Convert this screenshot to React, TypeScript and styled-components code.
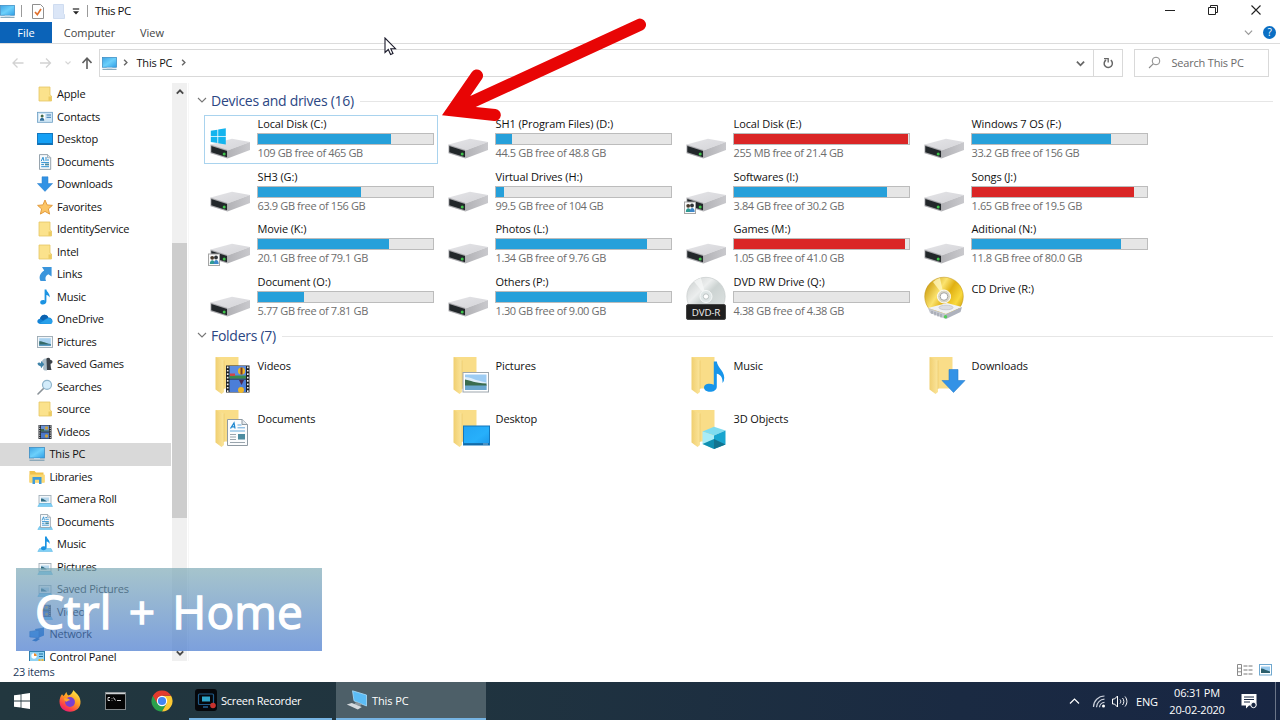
import React from "react";
import styled, { createGlobalStyle } from "styled-components";

const GlobalStyle = createGlobalStyle`
  * { box-sizing: border-box; }
  body {
    margin: 0;
    background: #fff;
    font-family: "Open Sans", "Noto Sans", sans-serif;
    font-size: 11px;
    letter-spacing: -0.1px;
    color: #111;
    overflow: hidden;
  }
  svg { display: block; flex: none; }
`;

/* ---------- icons ---------- */

const Monitor = ({ size = 16 }: { size?: number }) => (
  <svg width={size} height={size} viewBox="0 0 16 16">
    <defs>
      <linearGradient id="screen" x1="0" y1="0" x2="1" y2="1">
        <stop offset="0" stopColor="#3fa4e4" />
        <stop offset="0.5" stopColor="#6cd0fb" />
        <stop offset="1" stopColor="#2f9ee6" />
      </linearGradient>
    </defs>
    <rect x="0.5" y="1.5" width="15" height="10.5" fill="url(#screen)" stroke="#3c8dc4" strokeWidth="0.8" />
    <path d="M5 12.3h6v1.2H5z" fill="#cfe3ef" />
    <path d="M0.5 14.2h15" stroke="#6a93ab" strokeWidth="1" />
  </svg>
);

const FolderSmall = () => (
  <svg width="16" height="16" viewBox="0 0 16 16">
    <path d="M2 1h11v8l1.5 1v5H2z" fill="#fbe28c" stroke="#e6c765" strokeWidth="0.8" />
    <path d="M11.5 10.5h2.8v4.3h-2.8z" fill="#eccb62" />
  </svg>
);

const ContactsIcon = () => (
  <svg width="16" height="16" viewBox="0 0 16 16">
    <rect x="0.5" y="3.3" width="15" height="10" fill="#cfe6f6" stroke="#6d9fc4" strokeWidth="0.8" />
    <rect x="2.3" y="5" width="5.6" height="6.8" fill="#fff" />
    <circle cx="5.1" cy="7" r="1.5" fill="#456b4c" />
    <path d="M2.8 11.8c0-4 4.6-4 4.6 0z" fill="#2d6e9c" />
    <path d="M9.5 6h4.5M9.5 8.3h4.5" stroke="#3f7db3" />
  </svg>
);

const DesktopSmall = () => (
  <svg width="16" height="16" viewBox="0 0 16 16">
    <rect x="0.5" y="2.5" width="15" height="11" fill="#15a0f5" stroke="#1477bd" />
    <path d="M1 12.8h14" stroke="#0e5f9c" />
  </svg>
);

const PageShape = () => (
  <>
    <path d="M2.5.6h8.2l3 3v11.8H2.5z" fill="#f7fafc" stroke="#8b9aa5" strokeWidth="0.9" />
    <path d="M10.5.8v3h3" fill="#dce5eb" stroke="#8b9aa5" strokeWidth="0.7" />
    <path d="M4.2 7.2 6 3.2l1 4M8 4h2M8 6h4M4.2 8.6h7.8M4.2 10.6H7M4.2 12.7H12" stroke="#2d8fd0" fill="none" strokeWidth="1" />
    <path d="M8 9.6h4v1.8H8z" fill="#4b8a9c" />
  </>
);

const DocumentSmall = () => (
  <svg width="16" height="16" viewBox="0 0 16 16"><PageShape /></svg>
);

const DownloadIcon = () => (
  <svg width="16" height="16" viewBox="0 0 16 16">
    <path d="M5 .8h6v6.7h4.6L8 15.4.4 7.5H5z" fill="#3292e4" stroke="#2b7fca" strokeWidth="0.5" />
  </svg>
);

const StarIcon = () => (
  <svg width="16" height="16" viewBox="0 0 16 16">
    <path d="M8 1l2.1 4.9 5.3.5-4 3.5 1.2 5.2L8 12.4l-4.6 2.7 1.2-5.2-4-3.5 5.3-.5z" fill="#fcc566" stroke="#df9433" strokeWidth="0.9" />
  </svg>
);

const LinkIcon = () => (
  <svg width="16" height="16" viewBox="0 0 16 16">
    <path d="M5 1h9.600v9.400L11.300 8.300C8.500 10 7.800 12 9 15H3.500C1.500 11 3 7 7.200 4.400z" fill="#3a95dc" />
  </svg>
);

const NoteShape = () => (
  <path d="M7.600.6h1.800c.3 2.700 4 3.900 3.100 8-.6-1.800-1.700-2.500-3.100-2.700v6.600c0 3.600-6.200 3.900-6.200.9 0-2 2.500-2.900 4.400-2z" fill="#1b93e2" />
);

const MusicSmall = () => (
  <svg width="16" height="16" viewBox="0 0 16 16"><NoteShape /></svg>
);

const CloudIcon = () => (
  <svg width="16" height="16" viewBox="0 0 16 16">
    <path d="M3.200 13C-.8 12.600-.4 8 3 7.700 4 3 10 2.500 11.300 6.500c4.700-.2 5.700 5.800 1.700 6.500z" fill="#1483d6" />
    <path d="M3 7.700C4 3 10 2.500 11.300 6.500L6 9.500z" fill="#0c62b0" />
    <path d="M2 12.500l9-5.200c4-.5 6 4.700 2.200 5.700z" fill="#28a0ea" />
  </svg>
);

const PictureShape = () => (
  <>
    <rect x="0.5" y="2.500" width="15" height="11" fill="#f2f6f9" stroke="#9aa8b2" strokeWidth="0.9" />
    <rect x="2.200" y="4.200" width="11.600" height="7.600" fill="#a9d2f0" />
    <path d="M2.200 7.200c4 0 6 2 11.600 2.800v1.800H2.200z" fill="#356a68" />
    <path d="M2.200 10.500h11.600v1.300H2.200z" fill="#5b9fd0" />
  </>
);

const PictureSmall = () => (
  <svg width="16" height="16" viewBox="0 0 16 16"><PictureShape /></svg>
);

const GamesIcon = () => (
  <svg width="16" height="16" viewBox="0 0 16 16">
    <path d="M9 3c1.500-2 4.500-1.500 4.300 1 2.700-.5 3 3.500.4 3.700-.4 2 .3 4 .8 6.300H8.500z" fill="#3c4248" />
    <path d="M4.500 6.500C5 3 9 1 9.500 3.500L10 14.500c-4 .5-4.500-2-3.500-4z" fill="#a9bcc7" />
    <path d="M.5 7.200c1-1 2.500-1 3.300.300L4.200 5l3 3.300-3 4-.8-2.300C2 10.200.8 9 .5 7.200z" fill="#3f83a8" />
  </svg>
);

const SearchColor = () => (
  <svg width="16" height="16" viewBox="0 0 16 16">
    <path d="M1 15l5.500-5.500" stroke="#8a9298" strokeWidth="1.600" strokeLinecap="round" />
    <circle cx="10" cy="5.800" r="4.500" fill="#d3ecfb" stroke="#8fb4cb" strokeWidth="1.200" />
  </svg>
);

const FilmShape = () => (
  <>
    <rect x="1.500" y="1" width="13" height="14" fill="#262a30" />
    <rect x="4" y="1.500" width="8" height="6" fill="#6b92d8" />
    <rect x="4" y="8.500" width="8" height="6" fill="#4c79c9" />
    <circle cx="9.500" cy="4" r="1.700" fill="#c9a23f" />
    <circle cx="9.500" cy="12" r="1.700" fill="#c9a23f" />
    <path d="M4 6.500h8v1H4zM4 5h3v1.500H4z" fill="#3d6a52" />
    <path d="M2.700 1.500v13M13.300 1.500v13" stroke="#d5d5d5" strokeDasharray="1.200 1.100" strokeWidth="1" />
  </>
);

const FilmSmall = () => (
  <svg width="16" height="16" viewBox="0 0 16 16"><FilmShape /></svg>
);

const LibrariesIcon = () => (
  <svg width="16" height="16" viewBox="0 0 16 16">
    <path d="M.5 2h5l1.500 1.500h7.500V6h1v7.500H.5z" fill="#f0c24c" />
    <path d="M.5 5.500h15v8H.5z" fill="#fbd973" />
    <path d="M3.500 8h9v7H10v-4.200H6V15H3.500z" fill="#3f9bd9" />
  </svg>
);

const TrayShape = () => (
  <path d="M2.500 12.500h11.500l1.500 3H.8z" fill="#7fd0f6" stroke="#55b3e2" strokeWidth="0.5" />
);

const LibPicture = () => (
  <svg width="16" height="16" viewBox="0 0 16 16">
    <rect x="2" y="4.500" width="12" height="8" fill="#f2f6f9" stroke="#9aa8b2" strokeWidth="0.8" />
    <path d="M4 6.500h8v4H4z" fill="#b5d6ec" />
    <path d="M4 7.500c3 0 4 2 6 3H4z" fill="#2f6a80" />
    <TrayShape />
  </svg>
);

const LibDocument = () => (
  <svg width="16" height="16" viewBox="0 0 16 16">
    <TrayShape />
    <g transform="translate(1.300 0) scale(0.880)"><PageShape /></g>
  </svg>
);

const LibMusic = () => (
  <svg width="16" height="16" viewBox="0 0 16 16">
    <TrayShape />
    <g transform="translate(1 0) scale(0.920)"><NoteShape /></g>
  </svg>
);

const LibVideo = () => (
  <svg width="16" height="16" viewBox="0 0 16 16">
    <TrayShape />
    <g transform="translate(1.500 0) scale(0.850)"><FilmShape /></g>
  </svg>
);

const NetworkIcon = () => (
  <svg width="16" height="16" viewBox="0 0 16 16">
    <path d="M6 3l9-1.500v8L9 12z" fill="#2c86d6" />
    <path d="M.8 5.500l9.200-1.300v7.600L.8 11z" fill="#3da0ee" stroke="#1f6fb8" strokeWidth="0.6" />
    <path d="M3 14.500l5-3 3 1.500-4 2.500z" fill="#2478bf" />
  </svg>
);

const ControlPanelIcon = () => (
  <svg width="16" height="16" viewBox="0 0 16 16">
    <rect x="0.500" y="2.500" width="15" height="11.500" fill="#8fd2f3" stroke="#2f7fae" />
    <circle cx="5" cy="7" r="2.700" fill="#fff" />
    <path d="M5 7V4.300A2.700 2.700 0 0 1 7.700 7z" fill="#f08b2c" />
    <path d="M10 5h4M10 7.500h4" stroke="#1d6ea3" />
    <path d="M9.500 10h2v2h-2zM12.500 10h2v2h-2z" fill="#f3b32b" />
  </svg>
);

const DriveIcon = ({ badge }: { badge?: "windows" | "shared" }) => (
  <svg width="44" height="44" viewBox="0 0 44 44">
    <defs>
      <linearGradient id="side" x1="0" y1="0" x2="1" y2="0">
        <stop offset="0" stopColor="#b2b2b6" />
        <stop offset="1" stopColor="#c9c9cd" />
      </linearGradient>
      <linearGradient id="top" x1="0" y1="0" x2="1" y2="1">
        <stop offset="0" stopColor="#e4e4e7" />
        <stop offset="1" stopColor="#d4d4d8" />
      </linearGradient>
    </defs>
    <path d="M2.500 26.500 24 20.800l18 3.200-22.500 8.500z" fill="url(#top)" />
    <path d="M19.500 32.500 42 24v8L19.500 40.600z" fill="url(#side)" />
    <path d="M2.500 26.500l17 5.500v8.600l-17-5.400z" fill="#a8a8ac" />
    <path d="M3.300 28l15.800 5v6.200l-15.800-5z" fill="#22272a" />
    <circle cx="16.200" cy="36" r="1.500" fill="#3fc24b" />
    {badge === "windows" && (
      <path d="M2.800 12.700l6.600-1v6.300H2.800zM10.200 11.500l7.600-1.200V18h-7.600zM2.800 18.800h6.600v6.300l-6.600-1zM10.200 18.800h7.600v7.700l-7.600-1.200z" fill="#14b4ee" />
    )}
    {badge === "shared" && (
      <g>
        <rect x="0.500" y="31" width="11" height="11.500" fill="#fafafa" stroke="#a5a5a5" />
        <circle cx="4.200" cy="34.800" r="1.900" fill="#4a3b2c" />
        <circle cx="8" cy="34.500" r="1.900" fill="#2f3438" />
        <path d="M1.800 41c0-5 5-5 5 0z" fill="#2f9a92" />
        <path d="M5.700 41c0-5.500 5-5.500 5 0z" fill="#3d87c8" />
      </g>
    )}
  </svg>
);

const DvdIcon = () => (
  <svg width="44" height="44" viewBox="0 0 44 44">
    <defs>
      <linearGradient id="dvd" x1="0" y1="0" x2="1" y2="1">
        <stop offset="0" stopColor="#c7cccb" />
        <stop offset="0.350" stopColor="#eceeee" />
        <stop offset="0.500" stopColor="#ccd3d2" />
        <stop offset="1" stopColor="#e2e6e6" />
      </linearGradient>
    </defs>
    <circle cx="22" cy="20.500" r="19.200" fill="url(#dvd)" stroke="#c3c8c8" strokeWidth="0.600" />
    <path d="M22 20.500 10 5.500a19 19 0 0 1 7-3.500z" fill="#f8f9f9" opacity="0.700" />
    <circle cx="22" cy="20.500" r="6" fill="#dfe6e6" stroke="#f7f9f9" />
    <circle cx="22" cy="20.500" r="2.700" fill="#fff" stroke="#bcc3c3" />
    <rect x="2.500" y="28.500" width="39" height="15" rx="1.500" fill="#1f1f1f" stroke="#454545" />
    <text x="22" y="39.500" textAnchor="middle" fontSize="9.800" fill="#f0f0f0" letterSpacing="-0.200">DVD-R</text>
  </svg>
);

const CdIcon = () => (
  <svg width="44" height="44" viewBox="0 0 44 44">
    <defs>
      <linearGradient id="cd" x1="0" y1="0.200" x2="1" y2="0.800">
        <stop offset="0" stopColor="#c99706" />
        <stop offset="0.350" stopColor="#fbe36f" />
        <stop offset="0.550" stopColor="#e0b012" />
        <stop offset="0.800" stopColor="#f9d93d" />
        <stop offset="1" stopColor="#cf9e0a" />
      </linearGradient>
    </defs>
    <circle cx="22" cy="20.500" r="19.300" fill="url(#cd)" stroke="#bd9014" strokeWidth="0.500" />
    <path d="M22 20.500 11 6a18 18 0 0 1 7-4z" fill="#fff6bd" opacity="0.800" />
    <circle cx="22" cy="20.500" r="6.500" fill="#d9d6c5" stroke="#fff" />
    <circle cx="22" cy="20.500" r="3.800" fill="#fff" stroke="#a5a5a5" />
    <path d="M6 32l19-5 15 4-16 7z" fill="#f1f2f4" />
    <path d="M6 32l18 6v5L8 37z" fill="#c3c6ce" />
    <path d="M24 38l16-7-1.500 5L24 43z" fill="#aeb2bd" />
    <ellipse cx="24" cy="31.500" rx="7" ry="2.300" fill="#dcdde2" stroke="#b8bac2" strokeWidth="0.600" />
    <path d="M10 35v3M13 36v3.500M16 37v3.500M19 38v3.500" stroke="#8f94a0" strokeWidth="0.900" />
    <circle cx="23.500" cy="40.800" r="1.700" fill="#52cc58" />
  </svg>
);

type Kind = "videos" | "pictures" | "music" | "downloads" | "documents" | "desktop" | "objects";

const FolderLarge = ({ kind }: { kind: Kind }) => (
  <svg width="44" height="44" viewBox="0 0 44 44">
    <defs>
      <linearGradient id="fold" x1="0" y1="0" x2="1" y2="0">
        <stop offset="0" stopColor="#f0cf70" />
        <stop offset="1" stopColor="#fbe59c" />
      </linearGradient>
      <linearGradient id="desk" x1="0" y1="0" x2="1" y2="1">
        <stop offset="0" stopColor="#22a4f4" />
        <stop offset="0.600" stopColor="#27b0fb" />
        <stop offset="1" stopColor="#1b97ea" />
      </linearGradient>
    </defs>
    <path d="M8 3h22.500v31.500H8z" fill="#f9dd88" />
    <path d="M7.500 3 16 6.500V38l-2.500 2-6-4.500z" fill="url(#fold)" />
    <path d="M16 6.500V35" stroke="#e6c263" strokeWidth="0.600" />
    {kind === "videos" && (
      <g>
        <rect x="18" y="11.500" width="23.500" height="27" fill="#1d2126" />
        <rect x="21.500" y="12" width="16.500" height="12.500" fill="#5d8de0" />
        <rect x="21.500" y="25.500" width="16.500" height="12.500" fill="#4b7ed8" />
        <path d="M21.500 21.500h16.500v3H21.500z" fill="#3c8a4c" />
        <circle cx="33.500" cy="17" r="3.600" fill="#ecb62c" />
        <path d="M33.500 13.500v7" stroke="#7a3c22" strokeWidth="2" />
        <path d="M22 19.500h5v2.500h-5z" fill="#cf4747" />
        <path d="M31 26h5l-2.500 5z" fill="#4a2a50" />
        <circle cx="33" cy="36" r="3" fill="#ecb62c" />
        <path d="M19.700 12.500v25.500M39.800 12.500v25.500" stroke="#f2f2f2" strokeWidth="1.600" strokeDasharray="1.700 1.700" />
      </g>
    )}
    {kind === "pictures" && (
      <g>
        <rect x="17" y="18.500" width="25.500" height="19.500" fill="#fff" stroke="#9da6ad" />
        <rect x="19" y="20.500" width="21.500" height="15.500" fill="#9dccf3" />
        <path d="M19 23c6 0 8 3 21.500 5.500V31H19z" fill="#dfeefa" />
        <path d="M19 25.500c6 1 9 3.500 21.500 4V32H19z" fill="#3b6c4e" />
        <path d="M19 31.500h21.500V36H19z" fill="#6aa6cd" />
      </g>
    )}
    {kind === "music" && (
      <path d="M29.800 7.500h3c.5 6.500 9.500 10.500 7 19.500l-1.300 2c.4-6-2.200-8.600-5.700-9.300v13c0 6.500-12.800 6.800-12.800.9 0-3.800 5.500-5 9.800-2.800z" fill="#1795ea" />
    )}
    {kind === "downloads" && (
      <path d="M27 15.500h9v11h7L31.500 38.500 20 26.500h7z" fill="#3392e6" stroke="#2a80cf" strokeWidth="0.600" />
    )}
    {kind === "documents" && (
      <g>
        <path d="M19.500 12.500h14.500l5.500 5v21h-20z" fill="#fbfcfd" stroke="#8f9aa3" />
        <path d="M34 12.500v5h5.500" fill="#e3e8ec" stroke="#8f9aa3" />
        <path d="M22.500 21.500l3.500-5.500 1 5.500M23.800 19.800h3" fill="none" stroke="#1f87cf" strokeWidth="1.300" />
        <path d="M29.500 18h4M29.500 20.800h7.500M22 24h15" stroke="#65a9da" />
        <path d="M22 27.500h6M22 30h6M22 32.500h6M22 35.500h15" stroke="#9aa5ad" />
        <rect x="30" y="27" width="7" height="5.500" fill="#4d8ca0" />
      </g>
    )}
    {kind === "desktop" && (
      <g>
        <rect x="17.500" y="19" width="26" height="19" fill="url(#desk)" stroke="#1577bb" />
        <path d="M18 37h25" stroke="#0f5b94" strokeWidth="1.400" />
        <path d="M37.500 37h4.500" stroke="#fff" strokeDasharray="1 1" />
      </g>
    )}
    {kind === "objects" && (
      <g>
        <path d="M18.500 24.500 30 19.800l11.500 3.700L30 28.500z" fill="#7fdcf0" />
        <path d="M18.500 24.500 30 28.500v13.500l-11.500-5z" fill="#a9ecf7" />
        <path d="M30 28.500l11.500-5V37.500L30 42z" fill="#18a5cf" />
        <path d="M18.500 37l11.500-5v10z" fill="#0f8fb1" />
        <path d="M30 32l11.500 5.500L30 42z" fill="#12738f" />
      </g>
    )}
  </svg>
);

const Chevron = ({ dir, color = "#666", size = 8, weight = 1.2 }: { dir: "up" | "down" | "right"; color?: string; size?: number; weight?: number }) => {
  const d = { up: "M1 7l4-4 4 4", down: "M1 3l4 4 4-4", right: "M3 1l4 4-4 4" }[dir];
  return (
    <svg width={size} height={size} viewBox="0 0 10 10">
      <path d={d} fill="none" stroke={color} strokeWidth={(weight * 10) / size} />
    </svg>
  );
};

/* ---------- layout ---------- */

const Screen = styled.div`
  position: relative;
  width: 1280px;
  height: 720px;
  display: flex;
  flex-direction: column;
  overflow: hidden;
  background: #fff;
`;

const TitleBar = styled.header`
  height: 22px;
  flex: none;
  display: flex;
  align-items: center;
`;

const QuickAccess = styled.div`
  display: flex;
  align-items: center;
  height: 22px;
`;

const Divider = styled.span<{ $left: number; $right: number }>`
  width: 1px;
  height: 12px;
  margin: 0 ${(p) => p.$right}px 0 ${(p) => p.$left}px;
  background: #9a9a9a;
`;

const PageIcon = styled.svg<{ $gap: number }>`
  margin-right: ${(p) => p.$gap}px;
`;

const WindowTitle = styled.span`
  line-height: 22px;
  font-size: 11.500px;
  letter-spacing: -0.450px;
`;

const WindowButtons = styled.div`
  display: flex;
  align-items: center;
  gap: 33px;
  margin-left: auto;
  padding: 0 19px 3px 0;
`;

const Ribbon = styled.nav`
  height: 22px;
  flex: none;
  display: flex;
  border-bottom: 1px solid #dcdcdc;
  line-height: 21px;
  color: #444;
`;

const RibbonTab = styled.div<{ $width: number; $active?: boolean }>`
  width: ${(p) => p.$width}px;
  text-align: center;
  letter-spacing: ${(p) => (p.$active ? "0" : "-0.05px")};
  background: ${(p) => (p.$active ? "#0b63b8" : "transparent")};
  color: ${(p) => (p.$active ? "#fff" : "inherit")};
`;

const RibbonEnd = styled.div`
  display: flex;
  align-items: center;
  gap: 10px;
  margin-left: auto;
  padding-right: 4px;
  margin-top: -1px;
`;

const HelpBadge = styled.span`
  width: 13px;
  height: 13px;
  border-radius: 50%;
  background: #0b6fc4;
  color: #fff;
  font-size: 10px;
  line-height: 13px;
  text-align: center;
`;

const AddressRow = styled.div`
  height: 39px;
  flex: none;
  display: flex;
  align-items: flex-start;
  padding-top: 5px;
`;

const NavArrows = styled.div`
  width: 99px;
  height: 28px;
  display: flex;
  align-items: center;
  padding-left: 12px;
`;

const AddressBox = styled.div`
  width: 1023.500px;
  height: 28px;
  border: 1px solid #d9d9d9;
  display: flex;
  align-items: center;
  padding-left: 2px;
`;

const Crumb = styled.div`
  display: flex;
  align-items: center;
  gap: 7.500px;
  padding-left: 5px;
  line-height: 24px;
  padding-bottom: 1px;
  letter-spacing: -0.200px;
`;

const AddressEnd = styled.div`
  display: flex;
  align-items: center;
  height: 26px;
  margin-left: auto;
`;

const RefreshCell = styled.div`
  width: 29px;
  height: 26px;
  margin-left: 8px;
  border-left: 1px solid #d9d9d9;
  display: grid;
  place-items: center;
`;

const SearchBox = styled.div`
  width: 135px;
  height: 28px;
  margin-left: 11px;
  border: 1px solid #d9d9d9;
  display: flex;
  align-items: center;
  gap: 11px;
  padding: 0 0 1px 13px;
  letter-spacing: -0.200px;
  color: #6a6a6a;
`;

const Body = styled.div`
  height: 578px;
  flex: none;
  display: flex;
`;

const Sidebar = styled.aside`
  width: 172px;
  height: 578px;
  overflow: hidden;
`;

const TreeRow = styled.div<{ $level: 1 | 2; $selected?: boolean }>`
  width: 171px;
  height: 22.5px;
  display: flex;
  align-items: center;
  gap: 4.5px;
  padding-left: ${(p) => (p.$level === 1 ? 29 : 36.500)}px;
  background: ${(p) => (p.$selected ? "#d9d9d9" : "transparent")};
  letter-spacing: -0.200px;
  line-height: 20px;
  white-space: nowrap;
`;

const ScrollTrack = styled.div`
  width: 15px;
  height: 578px;
  background: #f0f0f0;
  display: flex;
  flex-direction: column;
  align-items: center;
`;

const ScrollButton = styled.div`
  height: 17px;
  display: grid;
  place-items: center;
`;

const ScrollThumb = styled.div`
  width: 15px;
  height: 275px;
  margin: 143px 0 auto;
  background: #cdcdcd;
`;

const Content = styled.main`
  flex: 1;
  padding: 7px 0 0 8px;
  margin-left: 1px;
  border-left: 1px solid #f7f7f7;
`;

const GroupHeader = styled.div`
  height: 22px;
  width: 1076px;
  display: flex;
  align-items: center;
  padding-bottom: 2px;
  color: #2b4683;
  font-size: 14px;
  letter-spacing: -0.280px;
  gap: 4px;
`;

const GroupLine = styled.span`
  flex: 1;
  height: 1px;
  margin: 2px 0 0 2px;
  background: #e6e6e6;
`;

const Tiles = styled.section`
  display: grid;
  grid-template-columns: repeat(4, 238px);
  grid-auto-rows: 52.5px;
  padding: 3px 0 0 7px;
`;

const Tile = styled.div<{ $focused?: boolean }>`
  width: 234px;
  height: 49px;
  display: flex;
  border: 1px solid ${(p) => (p.$focused ? "#a9d3ee" : "transparent")};
  padding-left: 3px;
`;

const TileIcon = styled.div<{ $drop: number }>`
  width: 44px;
  height: 44px;
  padding-top: ${(p) => p.$drop}px;
`;

const TileInfo = styled.div<{ $top: number }>`
  width: 177px;
  margin-left: 5px;
  padding-top: ${(p) => p.$top}px;
  line-height: 17px;
`;

const TileName = styled.div`
  height: 17px;
  line-height: 16px;
  padding-left: 0.500px;
`;

const UsageBar = styled.div`
  width: 177px;
  height: 12px;
  border: 1px solid #bcbcbc;
  background: #e6e6e6;
`;

const UsageFill = styled.div<{ $full?: boolean }>`
  height: 10px;
  background: ${(p) => (p.$full ? "#da2626" : "#26a0da")};
`;

const FreeSpace = styled.div`
  color: #6d6d6d;
  line-height: 16px;
  padding-left: 0.500px;
  letter-spacing: -0.370px;
`;

const StatusBar = styled.footer`
  height: 21px;
  flex: none;
  display: flex;
  align-items: center;
  padding: 0 8px 0 13px;
  letter-spacing: -0.300px;
  color: #23395b;
`;

const ViewModes = styled.div`
  display: flex;
  align-items: center;
  gap: 6px;
  margin: -3px 0 0 auto;
`;

const Taskbar = styled.div`
  height: 38px;
  flex: none;
  display: flex;
  background: linear-gradient(90deg, #22373f 0%, #20343f 35%, #1a2a42 75%, #182643 100%);
  color: #fff;
`;

const TaskIcon = styled.div<{ $width: number }>`
  width: ${(p) => p.$width}px;
  height: 38px;
  display: grid;
  place-items: center;
`;

const TaskButton = styled.div<{ $width: number; $active?: boolean }>`
  width: ${(p) => p.$width}px;
  height: 38px;
  margin-right: 4px;
  border-bottom: 2px solid #76b4e3;
  background: ${(p) => (p.$active ? "#4d5f68" : "transparent")};
  display: flex;
  align-items: center;
  gap: 4px;
  letter-spacing: ${(p) => (p.$active ? "-0.1px" : "-0.28px")};
  padding-left: ${(p) => (p.$active ? 10 : 6)}px;
`;

const Tray = styled.div`
  display: flex;
  align-items: center;
  margin-left: auto;
`;

const Clock = styled.div`
  width: 60px;
  margin: 0 14px 0 9px;
  text-align: center;
  line-height: 17px;
  letter-spacing: -0.2px;
`;

const ShowDesktop = styled.div`
  width: 5px;
  height: 38px;
  margin-left: 18px;
  border-left: 1px solid #6b7588;
`;

const Caption = styled.div`
  position: absolute;
  left: 16px;
  top: 568px;
  width: 306px;
  height: 83px;
  background: linear-gradient(180deg, rgba(123, 168, 180, 0.68), rgba(62, 115, 204, 0.68));
  color: #fff;
  font-size: 46px;
  -webkit-text-stroke: 1.3px #fff;
  line-height: 87px;
  letter-spacing: 0.200px;
  word-spacing: 5px;
  text-align: center;
  white-space: nowrap;
`;

const ArrowMark = styled.svg`
  position: absolute;
  left: 436px;
  top: 14px;
`;

const Pointer = styled.svg`
  position: absolute;
  left: 384px;
  top: 37px;
`;

/* ---------- data ---------- */

type Node = { name: string; icon: React.ReactNode; level?: 1 | 2; selected?: boolean };

const tree: Node[] = [
  { name: "Apple", icon: <FolderSmall /> },
  { name: "Contacts", icon: <ContactsIcon /> },
  { name: "Desktop", icon: <DesktopSmall /> },
  { name: "Documents", icon: <DocumentSmall /> },
  { name: "Downloads", icon: <DownloadIcon /> },
  { name: "Favorites", icon: <StarIcon /> },
  { name: "IdentityService", icon: <FolderSmall /> },
  { name: "Intel", icon: <FolderSmall /> },
  { name: "Links", icon: <LinkIcon /> },
  { name: "Music", icon: <MusicSmall /> },
  { name: "OneDrive", icon: <CloudIcon /> },
  { name: "Pictures", icon: <PictureSmall /> },
  { name: "Saved Games", icon: <GamesIcon /> },
  { name: "Searches", icon: <SearchColor /> },
  { name: "source", icon: <FolderSmall /> },
  { name: "Videos", icon: <FilmSmall /> },
  { name: "This PC", icon: <Monitor />, level: 1, selected: true },
  { name: "Libraries", icon: <LibrariesIcon />, level: 1 },
  { name: "Camera Roll", icon: <LibPicture /> },
  { name: "Documents", icon: <LibDocument /> },
  { name: "Music", icon: <LibMusic /> },
  { name: "Pictures", icon: <LibPicture /> },
  { name: "Saved Pictures", icon: <LibPicture /> },
  { name: "Videos", icon: <LibVideo /> },
  { name: "Network", icon: <NetworkIcon />, level: 1 },
  { name: "Control Panel", icon: <ControlPanelIcon />, level: 1 },
];

type Drive = { name: string; free?: string; used?: number; full?: boolean; badge?: "windows" | "shared"; disc?: "dvd" | "cd" };

const drives: Drive[] = [
  { name: "Local Disk (C:)", free: "109 GB free of 465 GB", used: 133, badge: "windows" },
  { name: "SH1 (Program Files) (D:)", free: "44.5 GB free of 48.8 GB", used: 16 },
  { name: "Local Disk (E:)", free: "255 MB free of 21.4 GB", used: 174, full: true },
  { name: "Windows 7 OS (F:)", free: "33.2 GB free of 156 GB", used: 139 },
  { name: "SH3 (G:)", free: "63.9 GB free of 156 GB", used: 103 },
  { name: "Virtual Drives (H:)", free: "99.5 GB free of 104 GB", used: 8 },
  { name: "Softwares (I:)", free: "3.84 GB free of 30.2 GB", used: 153, badge: "shared" },
  { name: "Songs (J:)", free: "1.65 GB free of 19.5 GB", used: 162, full: true },
  { name: "Movie (K:)", free: "20.1 GB free of 79.1 GB", used: 131, badge: "shared" },
  { name: "Photos (L:)", free: "1.34 GB free of 9.76 GB", used: 151 },
  { name: "Games (M:)", free: "1.05 GB free of 41.0 GB", used: 171, full: true },
  { name: "Aditional (N:)", free: "11.8 GB free of 80.0 GB", used: 149 },
  { name: "Document (O:)", free: "5.77 GB free of 7.81 GB", used: 46 },
  { name: "Others (P:)", free: "1.30 GB free of 9.00 GB", used: 151 },
  { name: "DVD RW Drive (Q:)", free: "4.38 GB free of 4.38 GB", used: 0, disc: "dvd" },
  { name: "CD Drive (R:)", disc: "cd" },
];

const folders: { name: string; kind: Kind }[] = [
  { name: "Videos", kind: "videos" },
  { name: "Pictures", kind: "pictures" },
  { name: "Music", kind: "music" },
  { name: "Downloads", kind: "downloads" },
  { name: "Documents", kind: "documents" },
  { name: "Desktop", kind: "desktop" },
  { name: "3D Objects", kind: "objects" },
];

const DriveTile = ({ drive, focused }: { drive: Drive; focused?: boolean }) => (
  <Tile $focused={focused}>
    <TileIcon $drop={2}>
      {drive.disc === "dvd" ? <DvdIcon /> : drive.disc === "cd" ? <CdIcon /> : <DriveIcon badge={drive.badge} />}
    </TileIcon>
    <TileInfo $top={drive.free ? 0 : 7}>
      <TileName>{drive.name}</TileName>
      {drive.free && (
        <>
          <UsageBar>
            <UsageFill $full={drive.full} style={{ width: drive.used }} />
          </UsageBar>
          <FreeSpace>{drive.free}</FreeSpace>
        </>
      )}
    </TileInfo>
  </Tile>
);

export default function App() {
  return (
    <Screen>
      <GlobalStyle />
      <TitleBar>
        <QuickAccess>
          <Monitor size={15} />
          <Divider $left={6} $right={10} />
          <PageIcon $gap={9} width="12" height="15" viewBox="0 0 12 15">
            <path d="M.5.500h8l3 3v11H.500z" fill="#fff" stroke="#8f8f8f" />
            <path d="M3 8l2.300 2.600L9 5" fill="none" stroke="#e0702c" strokeWidth="1.700" />
          </PageIcon>
          <PageIcon $gap={7} width="12" height="15" viewBox="0 0 12 15">
            <path d="M.5.500h10v9l1 1v4H.500z" fill="#dbe6f7" stroke="#cfdcf0" />
          </PageIcon>
          <svg width="8" height="7" viewBox="0 0 8 7">
            <path d="M.8 1h6.400" stroke="#222" strokeWidth="1.200" />
            <path d="M1 3.200h6L4 6.400z" fill="#222" />
          </svg>
          <Divider $left={7} $right={7} />
        </QuickAccess>
        <WindowTitle>This PC</WindowTitle>
        <WindowButtons>
          <svg width="10" height="10" viewBox="0 0 10 10"><path d="M0 5.500h10" stroke="#222" /></svg>
          <svg width="10" height="10" viewBox="0 0 10 10">
            <path d="M.5 2.500h7v7h-7zM2.500 2.500v-2h7v7h-2" fill="none" stroke="#222" />
          </svg>
          <svg width="10" height="10" viewBox="0 0 10 10"><path d="M.5.500l9 9M9.500.500l-9 9" stroke="#222" strokeWidth="1.100" /></svg>
        </WindowButtons>
      </TitleBar>

      <Ribbon>
        <RibbonTab $width={52} $active>File</RibbonTab>
        <RibbonTab $width={75}>Computer</RibbonTab>
        <RibbonTab $width={50}>View</RibbonTab>
        <RibbonEnd>
          <Chevron dir="down" color="#999" size={9} />
          <HelpBadge>?</HelpBadge>
        </RibbonEnd>
      </Ribbon>

      <AddressRow>
        <NavArrows>
          <svg width="80" height="14" viewBox="0 0 80 14" fill="none">
            <path d="M11.500 7H1M5.500 2.500 1 7l4.500 4.500" stroke="#d2d2d2" strokeWidth="1.300" />
            <path d="M28 7h10.500M34 2.500 38.500 7 34 11.500" stroke="#d2d2d2" strokeWidth="1.300" />
            <path d="M53.500 5.500 56 8l2.500-2.500" stroke="#d5d5d5" strokeWidth="1.100" />
            <path d="M75 13V2.200M70.500 7 75 2.200 79.500 7" stroke="#5e5e5e" strokeWidth="1.600" />
          </svg>
        </NavArrows>
        <AddressBox>
          <Monitor size={15} />
          <Crumb>
            <Chevron dir="right" size={7} weight={1.4} color="#666" />
            This PC
            <Chevron dir="right" size={7} weight={1.4} color="#666" />
          </Crumb>
          <AddressEnd>
            <Chevron dir="down" size={9} weight={1.8} color="#666" />
            <RefreshCell>
              <svg width="12" height="12" viewBox="0 0 12 12" fill="none">
                <path d="M8.800 3.200A4.100 4.100 0 1 1 4 3" stroke="#666" strokeWidth="1.500" />
                <path d="M2 1.700h4.200v3.900" stroke="#666" strokeWidth="1.300" />
              </svg>
            </RefreshCell>
          </AddressEnd>
        </AddressBox>
        <SearchBox>
          <svg width="13" height="13" viewBox="0 0 13 13" fill="none">
            <circle cx="8" cy="5" r="3.800" stroke="#8a8a8a" strokeWidth="1" />
            <path d="M5.200 7.800 1 12" stroke="#8a8a8a" strokeWidth="1.100" />
          </svg>
          Search This PC
        </SearchBox>
      </AddressRow>

      <Body>
        <Sidebar>
          {tree.map((n, i) => (
            <TreeRow key={i} $level={n.level ?? 2} $selected={n.selected}>
              {n.icon}
              {n.name}
            </TreeRow>
          ))}
        </Sidebar>
        <ScrollTrack>
          <ScrollButton><Chevron dir="up" size={8} weight={1.9} color="#4a4a4a" /></ScrollButton>
          <ScrollThumb />
          <ScrollButton><Chevron dir="down" size={8} weight={1.9} color="#4a4a4a" /></ScrollButton>
        </ScrollTrack>
        <Content>
          <GroupHeader>
            <Chevron dir="down" size={10} weight={1.1} color="#777" />
            Devices and drives (16)
            <GroupLine />
          </GroupHeader>
          <Tiles>
            {drives.map((d, i) => <DriveTile key={d.name} drive={d} focused={i === 0} />)}
          </Tiles>
          <GroupHeader>
            <Chevron dir="down" size={10} weight={1.1} color="#777" />
            Folders (7)
            <GroupLine />
          </GroupHeader>
          <Tiles>
            {folders.map((f) => (
              <Tile key={f.name}>
                <TileIcon $drop={3}><FolderLarge kind={f.kind} /></TileIcon>
                <TileInfo $top={7}>
                  <TileName>{f.name}</TileName>
                </TileInfo>
              </Tile>
            ))}
          </Tiles>
        </Content>
      </Body>

      <StatusBar>
        23 items
        <ViewModes>
          <svg width="16" height="12" viewBox="0 0 16 12" fill="none">
            <path d="M.5.500h4v11h-4zM.5 4.200h4M.5 7.800h4" stroke="#8a8a8a" />
            <path d="M6.500 2h4M11.500 2h4M6.500 6h4M11.500 6h4M6.500 10h4M11.500 10h4" stroke="#777" />
          </svg>
          <svg width="13" height="12" viewBox="0 0 13 12">
            <rect x="0.500" y="0.500" width="12" height="10.500" fill="#fff" stroke="#6fa8cf" />
            <path d="M2 2.500h9v6H2z" fill="#9acbee" />
            <path d="M2 4.500c3 0 5 2 9 3v1.500H2z" fill="#2c5f6c" />
          </svg>
        </ViewModes>
      </StatusBar>

      <Taskbar>
        <TaskIcon $width={44}>
          <svg width="16" height="16" viewBox="0 0 16 16">
            <path d="M0 2.300 6.600 1.400v6.200H0zM7.400 1.300 16 0v7.600H7.400zM0 8.400h6.600v6.200L0 13.700zM7.400 8.400H16V16l-8.600-1.300z" fill="#fff" />
          </svg>
        </TaskIcon>
        <TaskIcon $width={52}>
          <svg width="22" height="22" viewBox="0 0 22 22">
            <defs>
              <linearGradient id="fox" x1="0.800" y1="0" x2="0.200" y2="1">
                <stop offset="0" stopColor="#fff04a" />
                <stop offset="0.450" stopColor="#ff9a22" />
                <stop offset="0.800" stopColor="#fb3a4c" />
                <stop offset="1" stopColor="#e31587" />
              </linearGradient>
            </defs>
            <path d="M14.500 0c1 2.500 6.500 4.500 7 11.500.4 6-4.500 10.300-10.500 10.300S.500 17.500.500 11.500c0-3 1-5.500 2.500-7.300L4.500 6c1-1 1.800-2.500 3-4 .2 2 1 3 2 3.500C12 5 13.500 2.500 14.500 0z" fill="url(#fox)" />
            <circle cx="11" cy="12" r="4.900" fill="#7a3fd0" />
            <path d="M5 8.500c2.500-.5 5 0 6 1.800-2 .2-2.500 1.200-4 1.400C6 11 5 10 5 8.500z" fill="#ffa62b" />
          </svg>
        </TaskIcon>
        <TaskIcon $width={38}>
          <svg width="21" height="18" viewBox="0 0 21 18">
            <rect x="0.500" y="0.500" width="20" height="17" fill="#050505" stroke="#83898c" />
            <path d="M1 1.500h19" stroke="#cfd3d5" strokeWidth="1.500" />
            <path d="M5 5.500H3v3h2M7 6v.6M7 8v.6M8.500 5.500l2 3M12 8.500h4" stroke="#e5e5e5" fill="none" strokeWidth="0.900" />
          </svg>
        </TaskIcon>
        <TaskIcon $width={55}>
          <svg width="22" height="22" viewBox="0 0 22 22">
            <path d="M11 11 1.900 5.750A10.500 10.500 0 0 0 11 21.500l4.600-8z" fill="#2aa14c" />
            <path d="M11 11l4.600 2.500L11 21.500A10.500 10.500 0 0 0 20.100 5.750H11z" fill="#fcc934" />
            <path d="M11 5.800h9.100A10.500 10.500 0 0 0 1.900 5.750l4.300 7.500z" fill="#e33b2e" />
            <circle cx="11" cy="11" r="5.200" fill="#fff" />
            <circle cx="11" cy="11" r="4.100" fill="#4285f4" />
          </svg>
        </TaskIcon>
        <TaskButton $width={143}>
          <svg width="22" height="22" viewBox="0 0 22 22">
            <rect width="22" height="22" rx="3" fill="#05070b" />
            <rect x="3.500" y="5" width="15" height="10.500" rx="1" fill="none" stroke="#205a88" strokeWidth="1.200" />
            <rect x="7" y="7.500" width="8" height="5" fill="#2fa4c8" />
            <path d="M8 18h5" stroke="#2878b8" strokeWidth="1.200" />
            <circle cx="18" cy="16.500" r="2.800" fill="#c8322e" />
          </svg>
          Screen Recorder
        </TaskButton>
        <TaskButton $width={150} $active>
          <svg width="22" height="20" viewBox="0 0 22 20">
            <path d="M6.500.800 20.500 5v11L8 10.800z" fill="#5bbcf5" stroke="#a7dcfa" strokeWidth="0.800" />
            <path d="M10 12l6 2-2 2-6-1.500z" fill="#8f9aa0" />
            <path d="M.800 14.500l5-1.500 10 4-4 2.500z" fill="#d5dade" />
          </svg>
          This PC
        </TaskButton>
        <Tray>
          <svg width="68" height="18" viewBox="0 0 68 18" fill="none" stroke="#fff">
            <path d="M2 11.500 6.500 7l4.500 4.500" strokeWidth="1.200" />
            <path d="M25.500 15a11 11 0 0 1 11-11M28.500 15.200a8.300 8.300 0 0 1 8-8M31.500 15.300a5.300 5.300 0 0 1 5-5" strokeWidth="1.200" stroke="#c9cfda" />
            <circle cx="35.500" cy="14" r="1.500" fill="#fff" stroke="none" />
            <path d="M44.500 7h2l3-3v11l-3-3h-2z" strokeWidth="1" />
            <path d="M52 7.500c1 1.200 1 2.800 0 4M54.500 6c1.800 2 1.800 5 0 7M57 4.500c2.500 3 2.500 7 0 10" strokeWidth="1" />
          </svg>
          ENG
          <Clock>
            06:31 PM
            <br />
            20-02-2020
          </Clock>
          <svg width="16" height="16" viewBox="0 0 16 16">
            <path d="M.5 1h15v11.500H8L5 15.500v-3H.500z" fill="#fff" />
            <path d="M3 4h10M3 6.500h10M3 9h6" stroke="#1a2842" />
            <circle cx="12.500" cy="12" r="2.700" fill="#1a2842" stroke="#fff" />
          </svg>
          <ShowDesktop />
        </Tray>
      </Taskbar>

      <Caption>Ctrl + Home</Caption>
      <Pointer width="13" height="20" viewBox="0 0 13 20">
        <path d="M1 1v14.500l3.300-3 2.300 5 2.400-1-2.200-4.800h4.700z" fill="#fff" stroke="#1b1b2b" strokeWidth="1.100" />
      </Pointer>
      <ArrowMark width="214" height="112" viewBox="436 14 214 112">
        <path d="M442 115.300 471.700 72.200A6.100 6.100 0 0 1 482 79L470.300 96 637.300 19.200A6 6 0 0 1 642.500 30.300L475.700 107 495.500 109A6 6 0 0 1 494 121z" fill="#e80505" />
      </ArrowMark>
    </Screen>
  );
}
